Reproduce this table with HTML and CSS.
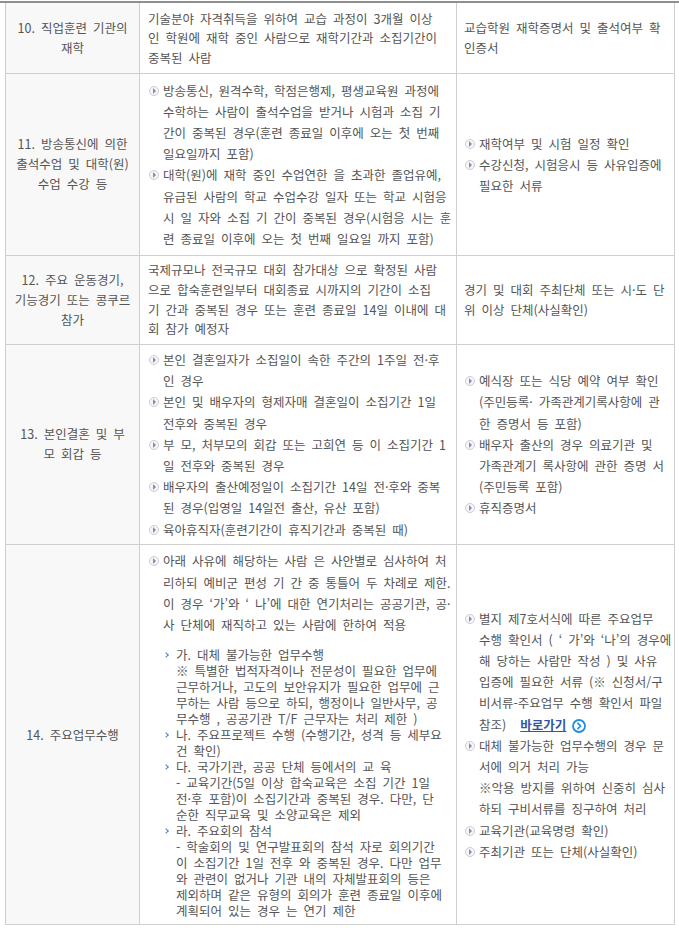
FILE: index.html
```html
<!DOCTYPE html>
<html lang="ko">
<head>
<meta charset="utf-8">
<title>연기 사유</title>
<link rel="stylesheet" href="styles.css">
</head>
<body>
<div class="topline"></div>
<table class="info">
  <colgroup><col class="c1"><col class="c2"><col class="c3"></colgroup>
  <tr class="r10">
    <th>10. 직업훈련 기관의<br>재학</th>
    <td><p class="txt">기술분야 자격취득을 위하여 교습 과정이 3개월 이상<br>인 학원에 재학 중인 사람으로 재학기간과 소집기간이<br>중복된 사람</p></td>
    <td><p class="txt">교습학원 재학증명서 및 출석여부 확<br>인증서</p></td>
  </tr>
  <tr class="r11">
    <th>11. 방송통신에 의한<br>출석수업 및 대학(원)<br>수업 수강 등</th>
    <td>
      <ul class="blist">
        <li>방송통신, 원격수학, 학점은행제, 평생교육원 과정에<br>수학하는 사람이 출석수업을 받거나 시험과 소집 기<br>간이 중복된 경우(훈련 종료일 이후에 오는 첫 번째<br>일요일까지 포함)</li>
        <li>대학(원)에 재학 중인 수업연한 을 초과한 졸업유예,<br>유급된 사람의 학교 수업수강 일자 또는 학교 시험응<br>시 일 자와 소집 기 간이 중복된 경우(시험응 시는 훈<br>련 종료일 이후에 오는 첫 번째 일요일 까지 포함)</li>
      </ul>
    </td>
    <td>
      <ul class="blist">
        <li>재학여부 및 시험 일정 확인</li>
        <li>수강신청, 시험응시 등 사유입증에<br>필요한 서류</li>
      </ul>
    </td>
  </tr>
  <tr class="r12">
    <th>12. 주요 운동경기,<br>기능경기 또는 콩쿠르<br>참가</th>
    <td><p class="txt">국제규모나 전국규모 대회 참가대상 으로 확정된 사람<br>으로 합숙훈련일부터 대회종료 시까지의 기간이 소집<br>기 간과 중복된 경우 또는 훈련 종료일 14일 이내에 대<br>회 참가 예정자</p></td>
    <td><p class="txt">경기 및 대회 주최단체 또는 시·도 단<br>위 이상 단체(사실확인)</p></td>
  </tr>
  <tr class="r13">
    <th>13. 본인결혼 및 부<br>모 회갑 등</th>
    <td>
      <ul class="blist">
        <li>본인 결혼일자가 소집일이 속한 주간의 1주일 전·후<br>인 경우</li>
        <li>본인 및 배우자의 형제자매 결혼일이 소집기간 1일<br>전후와 중복된 경우</li>
        <li>부 모, 처부모의 회갑 또는 고희연 등 이 소집기간 1<br>일 전후와 중복된 경우</li>
        <li>배우자의 출산예정일이 소집기간 14일 전·후와 중복<br>된 경우(입영일 14일전 출산, 유산 포함)</li>
        <li>육아휴직자(훈련기간이 휴직기간과 중복된 때)</li>
      </ul>
    </td>
    <td>
      <ul class="blist">
        <li>예식장 또는 식당 예약 여부 확인<br>(주민등록· 가족관계기록사항에 관<br>한 증명서 등 포함)</li>
        <li>배우자 출산의 경우 의료기관 및<br>가족관계기 록사항에 관한 증명 서<br>(주민등록 포함)</li>
        <li>휴직증명서</li>
      </ul>
    </td>
  </tr>
  <tr class="r14">
    <th>14. 주요업무수행</th>
    <td>
      <ul class="blist">
        <li>아래 사유에 해당하는 사람 은 사안별로 심사하여 처<br>리하되 예비군 편성 기 간 중 통틀어 두 차례로 제한.<br>이 경우 ‘가’와 ‘ 나’에 대한 연기처리는 공공기관, 공·<br>사 단체에 재직하고 있는 사람에 한하여 적용
          <ul class="slist">
            <li>가. 대체 불가능한 업무수행<br>※ 특별한 법적자격이나 전문성이 필요한 업무에<br>근무하거나, 고도의 보안유지가 필요한 업무에 근<br>무하는 사람 등으로 하되, 행정이나 일반사무, 공<br>무수행 , 공공기관 T/F 근무자는 처리 제한 )</li>
            <li>나. 주요프로젝트 수행 (수행기간, 성격 등 세부요<br>건 확인)</li>
            <li>다. 국가기관, 공공 단체 등에서의 교 육<br>- 교육기간(5일 이상 합숙교육은 소집 기간 1일<br>전·후 포함)이 소집기간과 중복된 경우. 다만, 단<br>순한 직무교육 및 소양교육은 제외</li>
            <li>라. 주요회의 참석<br>- 학술회의 및 연구발표회의 참석 자로 회의기간<br>이 소집기간 1일 전후 와 중복된 경우. 다만 업무<br>와 관련이 없거나 기관 내의 자체발표회의 등은<br>제외하며 같은 유형의 회의가 훈련 종료일 이후에<br>계획되어 있는 경우 는 연기 제한</li>
          </ul>
        </li>
      </ul>
    </td>
    <td>
      <ul class="blist">
        <li>별지 제7호서식에 따른 주요업무<br>수행 확인서 ( ‘ 가’와 ‘나’의 경우에<br>해 당하는 사람만 작성 ) 및 사유<br>입증에 필요한 서류 (※ 신청서/구<br>비서류-주요업무 수행 확인서 파일<br>참조) <a class="go" href="#">바로가기</a> <span class="go-ico"><svg width="14" height="14" viewBox="0 0 14 14"><circle cx="7" cy="7" r="6" fill="#fff" stroke="#1f8fe0" stroke-width="1.8"/><path d="M6 4.3 L8.6 7 L6 9.7" fill="none" stroke="#1f8fe0" stroke-width="1.8" stroke-linecap="round" stroke-linejoin="round"/></svg></span></li>
        <li>대체 불가능한 업무수행의 경우 문<br>서에 의거 처리 가능<br>※악용 방지를 위하여 신중히 심사<br>하되 구비서류를 징구하여 처리</li>
        <li>교육기관(교육명령 확인)</li>
        <li>주최기관 또는 단체(사실확인)</li>
      </ul>
    </td>
  </tr>
</table>
</body>
</html>
```

FILE: styles.css
```css
html, body {
  margin: 0;
  padding: 0;
  background: #fff;
}
body {
  font-family: "Noto Sans CJK KR", "Noto Sans", sans-serif;
  font-size: 12.5px;
  color: #555;
  word-spacing: 2.5px;
}
.topline {
  margin-top: 1px;
  height: 2px;
  background: #8f8f8f;
}
.info {
  margin-left: 5px;
  width: 669px;
  table-layout: fixed;
  border-collapse: collapse;
}
.info col.c1 { width: 134px; }
.info col.c2 { width: 317px; }
.info col.c3 { width: 218px; }
.info th,
.info td {
  border: 1px solid #cfcfcf;
  padding: 5px 6px 5px 7px;
  vertical-align: middle;
  white-space: nowrap;
  text-align: left;
}
.info tr:first-child th,
.info tr:first-child td {
  border-top: none;
}
.info th {
  background: #f8f8f8;
  font-weight: normal;
  text-align: center;
  line-height: 20px;
  padding-left: 4px;
  padding-right: 4px;
}
.info td:nth-child(2) {
  padding-left: 8px;
}
.r10 td {
  padding-top: 5.5px;
  padding-bottom: 5.5px;
}
.r11 td {
  padding-top: 5.5px;
  padding-bottom: 5.5px;
}
.r12 td,
.r13 td {
  padding-top: 4.5px;
  padding-bottom: 4.5px;
}
.txt {
  margin: 0;
  line-height: 19.7px;
}
.blist {
  list-style: none;
  margin: 0;
  padding: 0;
  line-height: 21.2px;
}
.blist > li {
  position: relative;
  padding-left: 15px;
}
.blist > li::before {
  content: "";
  position: absolute;
  left: 1px;
  top: 6px;
  width: 8px;
  height: 8px;
  border: 1px solid #cdcdcd;
  border-radius: 50%;
  background: #f6f6f6;
}
.blist > li::after {
  content: "";
  position: absolute;
  left: 5px;
  top: 8px;
  border-left: 3px solid #7890bb;
  border-top: 3px solid transparent;
  border-bottom: 3px solid transparent;
}
.slist {
  list-style: none;
  margin: 12px 0 0 0;
  padding: 0;
  line-height: 16px;
}
.slist > li {
  position: relative;
  padding-left: 13px;
}
.slist > li::before {
  content: "";
  position: absolute;
  left: 1px;
  top: 6px;
  width: 3px;
  height: 3px;
  border-top: 1px solid #4d7fcc;
  border-right: 1px solid #4d7fcc;
  transform: rotate(45deg);
}
.go {
  margin-left: 8px;
  color: #2f55a4;
  font-weight: bold;
  text-decoration: underline;
}
.go-ico {
  display: inline-block;
  vertical-align: -3px;
  line-height: 0;
}
```
